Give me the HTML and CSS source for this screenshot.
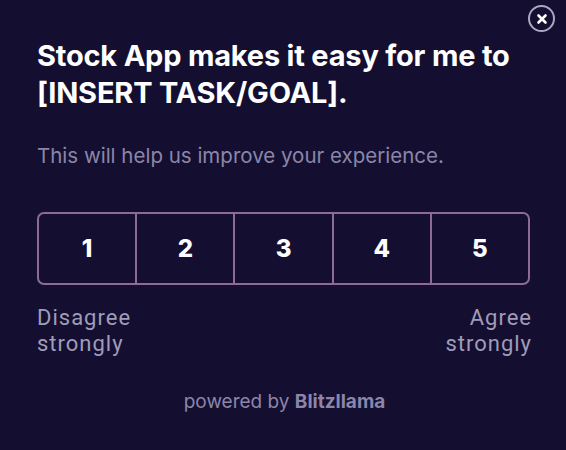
FILE: index.html
```html
<!DOCTYPE html>
<html>
<head>
<meta charset="utf-8">
<link rel="stylesheet" href="styles.css">
</head>
<body>
<div class="survey">
  <button class="close" aria-label="Close">
    <svg width="12" height="12" viewBox="0 0 12 12"><path d="M2.5 2.5 L9.5 9.5 M9.5 2.5 L2.5 9.5" stroke="#fff" stroke-width="2.6" stroke-linecap="round"/></svg>
  </button>
  <h1 class="title">Stock App makes it easy for me to [INSERT TASK/GOAL].</h1>
  <p class="subtitle">This will help us improve your experience.</p>
  <div class="scale">
    <div class="cell">1</div>
    <div class="cell">2</div>
    <div class="cell">3</div>
    <div class="cell">4</div>
    <div class="cell">5</div>
  </div>
  <div class="labels">
    <span class="label">Disagree<br>strongly</span>
    <span class="label right">Agree<br>strongly</span>
  </div>
  <div class="footer">powered by <b>Blitzllama</b></div>
</div>
</body>
</html>
```
FILE: styles.css
```css
html, body {
  margin: 0;
  padding: 0;
  background: #140f31;
}
.survey {
  position: relative;
  width: 566px;
  height: 450px;
  box-sizing: border-box;
  padding: 37px 37px 0 37px;
  font-family: Inter, "Noto Sans", sans-serif;
}
.close {
  position: absolute;
  top: 5px;
  right: 11px;
  width: 27px;
  height: 27px;
  border-radius: 50%;
  border: 2px solid #aca8c0;
  background: transparent;
  padding: 0;
  display: flex;
  align-items: center;
  justify-content: center;
}
.title {
  margin: 0;
  color: #ffffff;
  font-size: 29px;
  line-height: 37px;
  font-weight: 700;
  letter-spacing: -0.2px;
}
.subtitle {
  margin: 32px 0 0 0;
  color: #8b86a9;
  font-size: 20.5px;
  line-height: 26px;
}
.scale {
  margin-top: 43px;
  display: flex;
  border: 2px solid #8d6b92;
  border-radius: 7px;
  height: 73px;
  box-sizing: border-box;
  width: 493px;
}
.cell {
  flex: 1;
  display: flex;
  align-items: center;
  justify-content: center;
  color: #ffffff;
  font-weight: 800;
  font-size: 24px;
  border-left: 2px solid #8d6b92;
}
.cell:first-child {
  border-left: none;
}
.labels {
  margin-top: 20px;
  display: flex;
  justify-content: space-between;
  width: 495px;
}
.label {
  font-family: Roboto, sans-serif;
  color: #a09cb9;
  font-size: 22px;
  line-height: 26px;
  letter-spacing: 1px;
}
.label.right {
  text-align: right;
}
.footer {
  margin-top: 33px;
  text-align: center;
  color: #8b86a9;
  font-size: 19px;
  line-height: 24px;
  width: 495px;
}
.footer b {
  font-weight: 700;
}
```
